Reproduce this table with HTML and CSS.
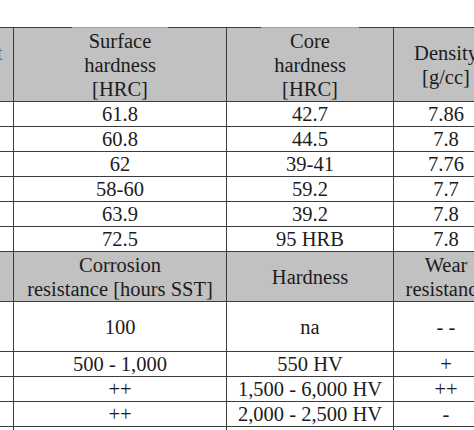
FILE: index.html
```html
<!DOCTYPE html>
<html lang="en">
<head>
<meta charset="utf-8">
<title>Coating properties</title>
<link rel="stylesheet" href="styles.css">
</head>
<body>
<div class="sheet">
  <div class="cell hd first">Treatment<br>method</div>
  <div class="cell hd">Surface<br>hardness<br>[HRC]</div>
  <div class="cell hd">Core<br>hardness<br>[HRC]</div>
  <div class="cell hd">Density<br>[g/cc]</div>

  <div class="cell"></div><div class="cell">61.8</div><div class="cell">42.7</div><div class="cell">7.86</div>
  <div class="cell"></div><div class="cell">60.8</div><div class="cell">44.5</div><div class="cell">7.8</div>
  <div class="cell"></div><div class="cell">62</div><div class="cell">39-41</div><div class="cell">7.76</div>
  <div class="cell"></div><div class="cell">58-60</div><div class="cell">59.2</div><div class="cell">7.7</div>
  <div class="cell"></div><div class="cell">63.9</div><div class="cell">39.2</div><div class="cell">7.8</div>
  <div class="cell"></div><div class="cell">72.5</div><div class="cell">95 HRB</div><div class="cell">7.8</div>

  <div class="cell hd"></div>
  <div class="cell hd">Corrosion<br>resistance [hours SST]</div>
  <div class="cell hd">Hardness</div>
  <div class="cell hd">Wear<br>resistance</div>

  <div class="cell"></div><div class="cell">100</div><div class="cell">na</div><div class="cell">- -</div>
  <div class="cell"></div><div class="cell">500 - 1,000</div><div class="cell">550 HV</div><div class="cell">+</div>
  <div class="cell"></div><div class="cell">++</div><div class="cell">1,500 - 6,000 HV</div><div class="cell">++</div>
  <div class="cell"></div><div class="cell">++</div><div class="cell">2,000 - 2,500 HV</div><div class="cell">-</div>
  <div class="cell"></div><div class="cell"></div><div class="cell"></div><div class="cell"></div>
</div>
</body>
</html>
```
FILE: styles.css
```css
html, body {
  margin: 0;
  padding: 0;
  overflow: hidden;
  background: #ffffff;
}

.sheet {
  display: grid;
  grid-template-columns: 99px 212px 166px 104px;
  grid-template-rows: 73px repeat(6, 24px) 49px 49px repeat(4, 24px);
  gap: 1px;
  padding: 1px;
  width: max-content;
  margin: 27px 0 0 -87px;
  background:
    linear-gradient(to right,
      #3c3c3c 159px, #a2a2a2 159px, #a2a2a2 255px, #3c3c3c 255px,
      #3c3c3c 348px, #a2a2a2 348px, #a2a2a2 446px, #3c3c3c 446px)
    top left / 100% 1px no-repeat,
    #3c3c3c;
  font-family: "Liberation Serif", "Times New Roman", serif;
  font-size: 20.5px;
  color: #1c1c1c;
}

.cell {
  display: flex;
  align-items: center;
  justify-content: center;
  text-align: center;
  line-height: 24px;
  background: #ffffff;
  white-space: nowrap;
}

.hd {
  background: #c1c1c1;
}

.first {
  padding-right: 5px;
  color: #6a6a6a;
}
```
